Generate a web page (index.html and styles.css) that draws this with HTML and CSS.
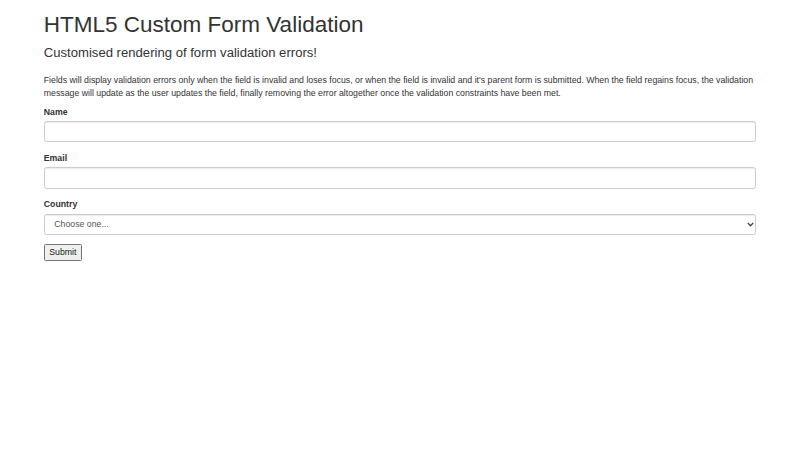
FILE: index.html
```html
<!DOCTYPE html>
<html lang="en">
<head>
<meta charset="utf-8">
<title>HTML5 Custom Form Validation</title>
<link rel="stylesheet" href="styles.css">
</head>
<body>
<div class="container">
  <h1 class="title">HTML5 Custom Form Validation</h1>
  <p class="lead">Customised rendering of form validation errors!</p>
  <p class="intro">Fields will display validation errors only when the field is invalid and loses focus, or when the field is invalid and it's parent form is submitted. When the field regains focus, the validation message will update as the user updates the field, finally removing the error altogether once the validation constraints have been met.</p>
  <form class="form" novalidate>
    <div class="form-group">
      <label class="label" for="name">Name</label>
      <input class="form-control" id="name" type="text" required>
    </div>
    <div class="form-group">
      <label class="label" for="email">Email</label>
      <input class="form-control" id="email" type="email" required>
    </div>
    <div class="form-group">
      <label class="label" for="country">Country</label>
      <div class="select-wrap">
        <select class="form-control select" id="country" required>
          <option value="">Choose one...</option>
          <option>United Kingdom</option>
          <option>United States</option>
        </select>
        <svg class="chevron" width="7" height="5" viewBox="0 0 7 5" aria-hidden="true">
          <polyline points="0.8,1 3.5,3.8 6.2,1" fill="none" stroke="#444" stroke-width="1.3"/>
        </svg>
      </div>
    </div>
    <button class="submit" type="submit">Submit</button>
  </form>
</div>
</body>
</html>
```
FILE: styles.css
```css
* { box-sizing: border-box; }
html, body { margin: 0; padding: 0; background: #fff; }
body {
  font-family: "Liberation Sans", Arial, Helvetica, sans-serif;
  font-size: 8.75px;
  line-height: 1.42857;
  color: #333;
}
.container {
  width: 731.25px;
  margin: 0 auto;
  padding: 0 9.375px;
}
.title {
  font-size: 22.5px;
  line-height: 1.1;
  font-weight: 500;
  margin: 12.5px 0 6.25px;
}
.lead {
  font-size: 13.125px;
  line-height: 1.4;
  font-weight: 300;
  margin: 0 0 12.5px;
}
.intro { margin: 0 0 6.25px; }
.form { margin: 0; }
.form-group { margin-bottom: 9.375px; }
.label {
  display: inline-block;
  max-width: 100%;
  margin-bottom: 3.125px;
  font-weight: bold;
}
.form-control {
  display: block;
  width: 100%;
  height: 21.25px;
  margin: 0;
  padding: 3.75px 7.5px;
  font: inherit;
  font-size: 8.75px;
  line-height: 1.42857;
  color: #555;
  background-color: #fff;
  border: 1px solid #ccc;
  border-radius: 2.5px;
  box-shadow: inset 0 1px 1px rgba(0,0,0,.075);
}
.select-wrap { position: relative; }
.select {
  -webkit-appearance: none;
  appearance: none;
  padding: 2px 16px 2px 9.5px;
}
.chevron {
  position: absolute;
  right: 2px;
  top: 8px;
  pointer-events: none;
}
.submit {
  display: inline-block;
  margin: 0;
  padding: 1px 4.5px;
  font: inherit;
  font-size: 8.75px;
  line-height: 12.5px;
  color: #222;
  background: #efefef;
  border: 1.25px solid #767676;
  border-radius: 1.5px;
}
```
